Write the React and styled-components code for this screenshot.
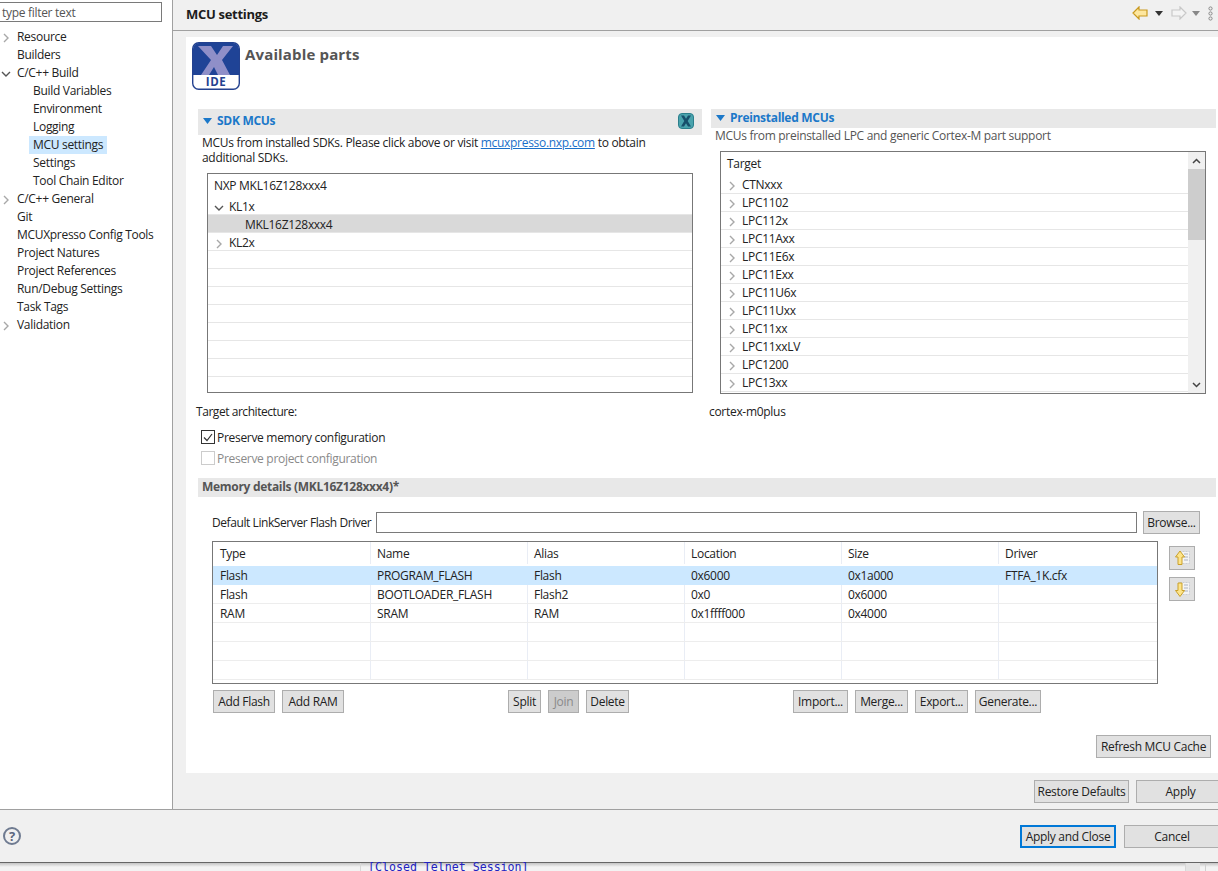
import React from "react";
import styled, { createGlobalStyle } from "styled-components";

const Global = createGlobalStyle`
  html, body { margin: 0; padding: 0; background: #f0f0f0; overflow: hidden; }
  * { box-sizing: border-box; }
  body { font-family: "Open Sans", "Noto Sans", "Liberation Sans", sans-serif; font-size: 12px; color: #222; letter-spacing: -0.3px; }
`;

const Page = styled.div`width: 1218px; height: 871px; display: flex; flex-direction: column; overflow: hidden; background: #f0f0f0;`;
const Top = styled.div`height: 810px; flex: none; display: flex; border-bottom: 1px solid #a0a0a0;`;
const Sidebar = styled.aside`width: 173px; background: #fff; border-right: 1px solid #a0a0a0; padding-top: 2px;`;
const Filter = styled.div`width: 162px; height: 20px; border: 1px solid #7a7a7a; border-left: 0; padding-left: 2px; line-height: 19px; color: #555;`;
const NavTree = styled.div`margin-top: 6px;`;
const NavRow = styled.div`height: 18px; display: flex; align-items: center; padding-left: ${p => (p.$level ? 33 : 17)}px; position: relative;`;
const NavChevron = styled.span`position: absolute; left: 1px; top: 5px; display: flex;`;
const NavLabel = styled.span`line-height: 18px; padding: 0 4px; margin-left: -4px; background: ${p => (p.$selected ? "#cce8ff" : "transparent")};`;

const Panel = styled.main`flex: 1; min-width: 0; display: flex; flex-direction: column;`;
const Header = styled.header`height: 31px; border-bottom: 1px solid #a0a0a0; display: flex; align-items: center; justify-content: space-between; padding: 0 5px 2px 13px;`;
const HeaderTitle = styled.h1`margin: 0; font-size: 13px; font-weight: 700; color: #1c1c1c;`;
const HeaderTools = styled.div`display: flex; align-items: center; margin-top: -2px;`;
const ToolSlot = styled.span`display: flex; margin-left: ${p => p.$gap || 0}px;`;
const WhiteBox = styled.section`margin: 6px 0 0 13px; height: 736px; background: #fff; padding-left: 6px; overflow: hidden;`;
const TitleRow = styled.div`height: 72px; padding-top: 5px; display: flex; gap: 5px;`;
const PageTitle = styled.h2`margin: 0; font-size: 15px; font-weight: 700; color: #555; line-height: 25px; letter-spacing: 0.15px;`;

const Columns = styled.div`display: grid; grid-template-columns: 504px 505px; column-gap: 9px; margin-left: 6px; height: 285px;`;
const SectionBar = styled.div`height: ${p => p.$h}px; background: #e8e8e8; display: flex; align-items: ${p => (p.$h > 20 ? "flex-start" : "center")}; padding: ${p => (p.$h > 20 ? "3px" : "0")} 8px ${p => (p.$h > 20 ? 0 : 1)}px 5px; justify-content: space-between;`;
const SectionName = styled.span`display: flex; align-items: center; gap: 5px; color: #1b78c9; font-weight: 700; line-height: 18px;`;
const BadgeSlot = styled.span`display: flex; margin-top: 1px;`;
const Desc = styled.p`margin: ${p => p.$top}px 0 0 4px; line-height: 15px; color: ${p => p.$dim ? "#555" : "#222"};`;
const Link = styled.a`color: #1a6fc9; text-decoration: underline;`;
const TreeBox = styled.div`margin: ${p => p.$top}px 0 0 9px; width: 486px; height: ${p => p.$h}px; border: 1px solid #777; overflow: hidden; display: flex;`;
const TreeBody = styled.div`flex: 1; min-width: 0;`;
const TreeHead = styled.div`height: ${p => p.$h}px; padding: 0 0 1px 6px; display: flex; align-items: center;`;
const TreeRow = styled.div`height: 18px; display: flex; align-items: center; border-bottom: 1px solid #e6e6e6; background: ${p => (p.$selected ? "#d9d9d9" : "transparent")}; padding: ${p => p.$drop || 0}px 0 0 ${p => p.$indent}px; position: relative;`;
const TreeChevron = styled.span`position: absolute; left: ${p => p.$left}px; top: ${p => p.$top || 5}px; display: flex;`;
const Scrollbar = styled.div`width: 17px; background: #f0f0f0; display: flex; flex-direction: column; position: relative;`;
const ScrollArrow = styled.div`height: 17px; display: flex; align-items: center; justify-content: center;`;
const ScrollThumb = styled.div`height: 71px; background: #cdcdcd; flex: none;`;
const ScrollTrack = styled.div`flex: 1;`;

const ArchRow = styled.div`margin: 9px 0 0 4px; height: 16px; display: grid; grid-template-columns: 513px 1fr; line-height: 16px; padding-top: 1px;`;
const ArchLabel = styled.span`letter-spacing: -0.45px;`;
const CheckRow = styled.label`height: 18px; margin: ${p => p.$top}px 0 0 9px; display: flex; align-items: center; gap: 2px; color: ${p => p.$off ? "#8a8a8a" : "#222"};`;
const Check = styled.span`width: 14px; height: 14px; border: 1px solid ${p => p.$off ? "#ccc" : "#333"}; display: flex; align-items: center; justify-content: center; background: #fff;`;
const DetailsBar = styled.div`margin: 11px 2px 0 6px; height: 19px; background: #e8e8e8; padding-left: 4px; font-weight: 700; color: #555; line-height: 18px;`;
const DriverRow = styled.div`margin: 14px 0 0 20px; height: 23px; display: flex; align-items: center;`;
const DriverLabel = styled.span`width: 164px; flex: none; white-space: nowrap; letter-spacing: -0.42px;`;
const DriverInput = styled.div`width: 761px; height: 21px; border: 1px solid #7a7a7a; background: #fff; margin-right: 6px;`;
const Button = styled.button`
  font: inherit; letter-spacing: inherit; height: 23px; width: ${p => p.$w}px; flex: none; padding: 0; margin: 0 0 0 ${p => p.$gap || 0}px;
  background: ${p => (p.$off ? "#cccccc" : "#e1e1e1")}; color: ${p => (p.$off ? "#8a8a8a" : "#222")};
  border: ${p => (p.$primary ? "2px solid #0078d7" : "1px solid #adadad")};
`;
const MemoryArea = styled.div`margin: 7px 0 0 20px; display: flex;`;
const MemoryTable = styled.div`width: 946px; height: 143px; border: 1px solid #777; overflow: hidden;`;
const MemHead = styled.div`height: 24px; display: grid; grid-template-columns: repeat(6, 157px); width: 944px; padding-bottom: 2px;`;
const MemRow = styled.div`height: 19px; display: grid; grid-template-columns: repeat(6, 157px); width: 944px; background: ${p => (p.$selected ? "#cce8ff" : "transparent")}; border-bottom: 1px solid ${p => (p.$selected ? "#cce8ff" : "#ededed")};`;
const MemCell = styled.div`
  padding-left: 6px; display: flex; align-items: center; border-left: 1px solid ${p => (p.$selected ? "transparent" : "#e9edf5")}; white-space: nowrap;
  &:first-child { border-left: 0; padding-left: 7px; }
`;
const SideButtons = styled.div`margin-left: 11px; padding-top: 5px; display: flex; flex-direction: column; gap: 7px;`;
const IconButton = styled.button`width: 26px; height: 24px; padding: 0; display: flex; align-items: center; justify-content: center; background: #e1e1e1; border: 1px solid #adadad;`;
const ActionRow = styled.div`margin: 6px 0 0 21px; display: flex;`;
const RefreshRow = styled.div`margin: 22px 7px 0 0; display: flex; justify-content: flex-end;`;
const PanelFooter = styled.div`margin: 7px -7px 0 0; display: flex; justify-content: flex-end;`;

const BottomBar = styled.footer`height: 53px; flex: none; display: flex; align-items: flex-start; justify-content: space-between; padding: 15px 0 0 3px; border-bottom: 1px solid #666;`;
const Help = styled.span`width: 18px; height: 18px; margin-top: 2px; border: 2px solid #6f7b91; border-radius: 50%; display: flex; align-items: center; justify-content: center; color: #5a667e; font-weight: 700; font-size: 13px; line-height: 1;`;
const BottomButtons = styled.div`display: flex; margin-right: -2px;`;
const Behind = styled.div`flex: 1; min-height: 0; background: linear-gradient(#c4c4c4, #f3f3f3 4px); padding-left: 360px; display: flex;`;
const Telnet = styled.div`border-left: 1px solid #d8d8d8; padding: 0 0 0 7px; font-family: "DejaVu Sans Mono", "Liberation Mono", monospace; font-size: 11.6px; line-height: 9px; letter-spacing: 0; color: #2222c0; white-space: nowrap;`;
const BehindScroll = styled.div`margin: 0 12px 0 auto; width: 21px; border-left: 1px solid #d8d8d8; border-right: 1px solid #d0d0d0; background: linear-gradient(90deg, #e4e4e4 0 14px, transparent 14px);`;

const Chev = ({ open }) => (
  <svg width="10" height="10" viewBox="0 0 10 10" fill="none" stroke={open ? "#555" : "#a8a8a8"} strokeWidth="1.4">
    <path d={open ? "M1 3l4 4 4-4" : "M3 1l4 4-4 4"} />
  </svg>
);
const Twisty = () => <svg width="9" height="6" viewBox="0 0 9 6"><path d="M0 0h9L4.500 6z" fill="#1b78c9" /></svg>;
const Drop = ({ c }) => <svg width="8" height="5" viewBox="0 0 8 5"><path d="M0 0h8L4 5z" fill={c} /></svg>;

const BackArrow = () => (
  <svg width="16" height="14" viewBox="0 0 16 14"><path d="M7 1L1 7l6 6V10h8V4H7z" fill="#fde7a0" stroke="#c99a20" strokeWidth="1.2" /></svg>
);
const ForwardArrow = () => (
  <svg width="16" height="14" viewBox="0 0 16 14"><path d="M9 1l6 6-6 6V10H1V4h8z" fill="#f4f4f4" stroke="#c8c8c8" strokeWidth="1.2" /></svg>
);
const Grip = () => (
  <svg width="5" height="15" viewBox="0 0 5 15" fill="none" stroke="#888"><circle cx="2.500" cy="2.500" r="1.600"/><circle cx="2.500" cy="7.500" r="1.600"/><circle cx="2.500" cy="12.500" r="1.600"/></svg>
);
const Logo = () => (
  <svg width="48" height="48" viewBox="0 0 48 48">
    <rect x="0.700" y="0.700" width="46.600" height="46.600" rx="6" fill="#fff" stroke="#23418f" strokeWidth="1.400" />
    <path d="M1 7a6 6 0 0 1 6-6h34a6 6 0 0 1 6 6v26H1z" fill="#1f4396" />
    <path d="M6 4H19L25 13L31 4H41L30 18L38 33H26L22 25L17 33H9L19 18Z" fill="#8f8fc8" />
    <text x="24" y="44" textAnchor="middle" fontSize="11.500" fontWeight="700" fill="#23418f" fontFamily="'Open Sans', sans-serif" letterSpacing="0.500">IDE</text>
  </svg>
);
const XBadge = () => (
  <svg width="16" height="16" viewBox="0 0 16 16">
    <rect x="0.500" y="0.500" width="15" height="15" rx="3.500" fill="#4aa3ad" stroke="#2b7f8c" />
    <path d="M3 2.500h3l2 3.200 2-3.200h3L9.700 8 13 13.500h-3l-2-3.200-2 3.200H3L6.300 8z" fill="#174f6b" />
  </svg>
);
const ListArrow = ({ up }) => (
  <svg width="18" height="18" viewBox="0 0 18 18">
    <rect x="6.500" y="2.500" width="10" height="12" fill="#f4f4f4" stroke="#c9ccd2" strokeDasharray="2 1" />
    <g stroke="#aab2c2"><path d="M11 5h4M11 8h4M11 11h4" /></g>
    <path d={up ? "M7 2l4.500 6H9v7.500H5V8H2.500z" : "M7 16.500L11.500 10.500H9V3H5v7.500H2.500z"} fill="#fde48a" stroke="#c9a02a" />
  </svg>
);

const nav = [
  ["Resource", 0, "closed"], ["Builders", 0], ["C/C++ Build", 0, "open"], ["Build Variables", 1], ["Environment", 1], ["Logging", 1],
  ["MCU settings", 1, null, true], ["Settings", 1], ["Tool Chain Editor", 1], ["C/C++ General", 0, "closed"], ["Git", 0],
  ["MCUXpresso Config Tools", 0], ["Project Natures", 0], ["Project References", 0], ["Run/Debug Settings", 0], ["Task Tags", 0], ["Validation", 0, "closed"],
];
const targets = ["CTNxxx", "LPC1102", "LPC112x", "LPC11Axx", "LPC11E6x", "LPC11Exx", "LPC11U6x", "LPC11Uxx", "LPC11xx", "LPC11xxLV", "LPC1200", "LPC13xx"];
const memCols = ["Type", "Name", "Alias", "Location", "Size", "Driver"];
const memRows = [
  ["Flash", "PROGRAM_FLASH", "Flash", "0x6000", "0x1a000", "FTFA_1K.cfx"],
  ["Flash", "BOOTLOADER_FLASH", "Flash2", "0x0", "0x6000", ""],
  ["RAM", "SRAM", "RAM", "0x1ffff000", "0x4000", ""],
  ["", "", "", "", "", ""], ["", "", "", "", "", ""], ["", "", "", "", "", ""],
];
const actions = [
  ["Add Flash", 62, 0], ["Add RAM", 62, 7], ["Split", 33, 164], ["Join", 31, 7, true], ["Delete", 43, 7],
  ["Import...", 55, 164], ["Merge...", 53, 7], ["Export...", 53, 7], ["Generate...", 66, 7],
];

export default function App() {
  return (
    <Page>
      <Global />
      <Top>
        <Sidebar>
          <Filter>type filter text</Filter>
          <NavTree>
            {nav.map(([label, level, tw, sel]) => (
              <NavRow key={label} $level={level}>
                {tw && <NavChevron><Chev open={tw === "open"} /></NavChevron>}
                <NavLabel $selected={sel}>{label}</NavLabel>
              </NavRow>
            ))}
          </NavTree>
        </Sidebar>
        <Panel>
          <Header>
            <HeaderTitle>MCU settings</HeaderTitle>
            <HeaderTools>
              <ToolSlot><BackArrow /></ToolSlot>
              <ToolSlot $gap={7}><Drop c="#333" /></ToolSlot>
              <ToolSlot $gap={8}><ForwardArrow /></ToolSlot>
              <ToolSlot $gap={5}><Drop c="#888" /></ToolSlot>
              <ToolSlot $gap={8}><Grip /></ToolSlot>
            </HeaderTools>
          </Header>
          <WhiteBox>
            <TitleRow><Logo /><PageTitle>Available parts</PageTitle></TitleRow>
            <Columns>
              <div>
                <SectionBar $h={26}>
                  <SectionName><Twisty />SDK MCUs</SectionName>
                  <BadgeSlot><XBadge /></BadgeSlot>
                </SectionBar>
                <Desc $top={0}>MCUs from installed SDKs. Please click above or visit <Link>mcuxpresso.nxp.com</Link> to obtain<br />additional SDKs.</Desc>
                <TreeBox $top={8} $h={220}>
                  <TreeBody>
                    <TreeHead $h={23}>NXP MKL16Z128xxx4</TreeHead>
                    <TreeRow $indent={21} $drop={2}><TreeChevron $left={6} $top={6}><Chev open /></TreeChevron>KL1x</TreeRow>
                    <TreeRow $indent={37} $drop={2} $selected>MKL16Z128xxx4</TreeRow>
                    <TreeRow $indent={21} $drop={2}><TreeChevron $left={6} $top={6}><Chev /></TreeChevron>KL2x</TreeRow>
                    {Array.from({ length: 7 }, (_, i) => <TreeRow key={i} $indent={0} />)}
                  </TreeBody>
                </TreeBox>
              </div>
              <div>
                <SectionBar $h={19}><SectionName><Twisty />Preinstalled MCUs</SectionName></SectionBar>
                <Desc $top={0} $dim>MCUs from preinstalled LPC and generic Cortex-M part support</Desc>
                <TreeBox $top={8} $h={243}>
                  <TreeBody>
                    <TreeHead $h={24}>Target</TreeHead>
                    {targets.map(t => (
                      <TreeRow key={t} $indent={21}><TreeChevron $left={6}><Chev /></TreeChevron>{t}</TreeRow>
                    ))}
                  </TreeBody>
                  <Scrollbar>
                    <ScrollArrow><svg width="9" height="6" viewBox="0 0 9 6" fill="none" stroke="#444" strokeWidth="1.500"><path d="M1 5l3.500-3.500L8 5" /></svg></ScrollArrow>
                    <ScrollThumb />
                    <ScrollTrack />
                    <ScrollArrow><svg width="9" height="6" viewBox="0 0 9 6" fill="none" stroke="#444" strokeWidth="1.500"><path d="M1 1l3.500 3.500L8 1" /></svg></ScrollArrow>
                  </Scrollbar>
                </TreeBox>
              </div>
            </Columns>
            <ArchRow><ArchLabel>Target architecture:</ArchLabel><span>cortex-m0plus</span></ArchRow>
            <CheckRow $top={9}>
              <Check><svg width="10" height="9" viewBox="0 0 10 9" fill="none" stroke="#333" strokeWidth="1.200"><path d="M1 4.500l3 3L9 1" /></svg></Check>
              Preserve memory configuration
            </CheckRow>
            <CheckRow $top={3} $off><Check $off />Preserve project configuration</CheckRow>
            <DetailsBar>Memory details (MKL16Z128xxx4)*</DetailsBar>
            <DriverRow>
              <DriverLabel>Default LinkServer Flash Driver</DriverLabel>
              <DriverInput />
              <Button $w={57}>Browse...</Button>
            </DriverRow>
            <MemoryArea>
              <MemoryTable>
                <MemHead>{memCols.map(c => <MemCell key={c}>{c}</MemCell>)}</MemHead>
                {memRows.map((r, i) => (
                  <MemRow key={i} $selected={i === 0}>
                    {r.map((c, j) => <MemCell key={j} $selected={i === 0}>{c}</MemCell>)}
                  </MemRow>
                ))}
              </MemoryTable>
              <SideButtons>
                <IconButton><ListArrow up /></IconButton>
                <IconButton><ListArrow /></IconButton>
              </SideButtons>
            </MemoryArea>
            <ActionRow>
              {actions.map(([t, w, g, off]) => <Button key={t} $w={w} $gap={g} $off={off}>{t}</Button>)}
            </ActionRow>
            <RefreshRow><Button $w={115}>Refresh MCU Cache</Button></RefreshRow>
          </WhiteBox>
          <PanelFooter>
            <Button $w={95}>Restore Defaults</Button>
            <Button $w={89} $gap={7}>Apply</Button>
          </PanelFooter>
        </Panel>
      </Top>
      <BottomBar>
        <Help>?</Help>
        <BottomButtons>
          <Button $w={96} $primary>Apply and Close</Button>
          <Button $w={96} $gap={8}>Cancel</Button>
        </BottomButtons>
      </BottomBar>
      <Behind><Telnet>[Closed Telnet Session]</Telnet><BehindScroll /></Behind>
    </Page>
  );
}
